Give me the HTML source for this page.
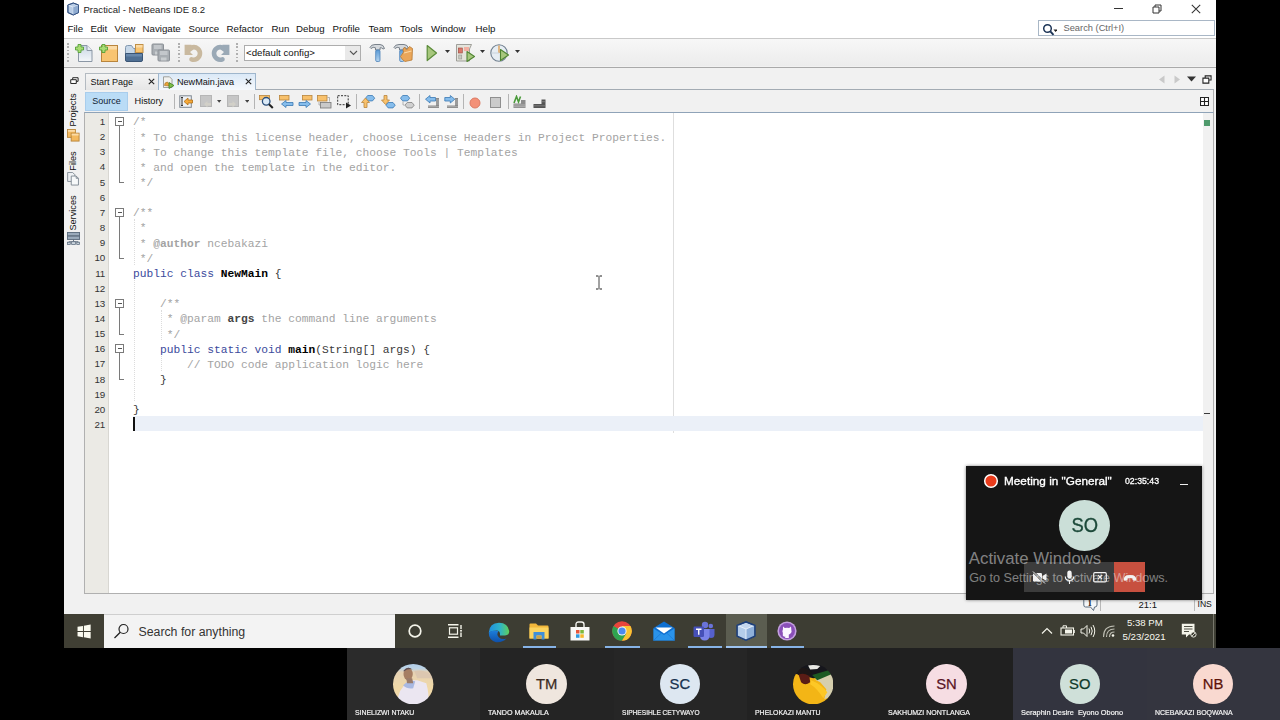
<!DOCTYPE html>
<html>
<head>
<meta charset="utf-8">
<title>Practical - NetBeans IDE 8.2</title>
<style>
*{box-sizing:border-box;margin:0;padding:0}
html,body{width:1280px;height:720px;overflow:hidden;background:#000;font-family:"Liberation Sans",sans-serif;}
.a{position:absolute}
.t{position:absolute;white-space:nowrap;line-height:1}
#win{left:64px;top:0;width:1152px;height:614px;background:#f1f1f1;overflow:hidden}
#title{left:0;top:0;width:1152px;height:38px;background:#fff}
.menu span{position:absolute;top:24px;font-size:9.7px;color:#111;white-space:nowrap;line-height:1}
#tbline{left:0;top:38px;width:1152px;height:1px;background:#c9c9c9}
#tbline2{left:0;top:66.5px;width:1152px;height:1px;background:#a9a9a9}
.code{position:absolute;left:69px;margin-top:2.2px;font-family:"Liberation Mono",monospace;font-size:11.25px;white-space:pre;line-height:15px;height:15px;color:#000}
.c{color:#a3a3a3}
.k{color:#3b4a9c}
.p{color:#3a3a3a}
.ln{position:absolute;left:21px;width:20px;margin-top:.8px;text-align:right;font-size:9.8px;letter-spacing:-.15px;color:#333;line-height:15px;height:15px}
.fold{position:absolute;margin-top:.7px;left:51px;width:9px;height:9px;border:1px solid #7a7a7a;background:#fff}
.fold:after{content:"";position:absolute;left:1.5px;top:3px;width:4px;height:1px;background:#555}
.fl{position:absolute;left:55px;width:1px;background:#7a7a7a}
.fe{position:absolute;left:55px;width:5px;height:1px;background:#7a7a7a}
.ig{position:absolute;width:0;border-left:1px dotted #dcdcdc}
.sep{position:absolute;top:94px;width:1px;height:15px;background:#b4b4b4}
</style>
</head>
<body>
<div id="win" class="a">
  <div id="title" class="a"></div>
  <!-- title text -->
  <div class="t" style="left:19.5px;top:5px;font-size:9.55px;color:#222">Practical - NetBeans IDE 8.2</div>
  <div class="menu">
    <span style="left:3.5px">File</span>
    <span style="left:26.5px">Edit</span>
    <span style="left:50.5px">View</span>
    <span style="left:78.5px">Navigate</span>
    <span style="left:124.5px">Source</span>
    <span style="left:162.5px">Refactor</span>
    <span style="left:207.5px">Run</span>
    <span style="left:232px">Debug</span>
    <span style="left:268.5px">Profile</span>
    <span style="left:304.5px">Team</span>
    <span style="left:336px">Tools</span>
    <span style="left:367px">Window</span>
    <span style="left:411.5px">Help</span>
  </div>
  <div id="tbline" class="a"></div>
  <div id="tbline2" class="a"></div>
  <div class="a" style="left:0;top:39px;width:1152px;height:27px;background:linear-gradient(#f7f7f7,#ececec)"></div>
<div class="a" style="left:2.5px;top:43px;width:2px;height:19px;background:repeating-linear-gradient(#b0b0b0 0 1.6px,transparent 1.6px 3.4px)"></div>
<div class="a" style="left:113.5px;top:43px;width:2px;height:19px;background:repeating-linear-gradient(#b0b0b0 0 1.6px,transparent 1.6px 3.4px)"></div>
<div class="a" style="left:171.5px;top:43px;width:2px;height:19px;background:repeating-linear-gradient(#b0b0b0 0 1.6px,transparent 1.6px 3.4px)"></div>
<svg class="a" style="left:10px;top:43px" width="20" height="20" viewBox="0 0 20 20"><defs><linearGradient id="pg" x1="0" y1="0" x2="0" y2="1"><stop offset="0" stop-color="#c9d6e4"/><stop offset="1" stop-color="#f4f7fa"/></linearGradient></defs><path d="M4.5 2.5H13L18 7.5V18.5H4.5Z" fill="url(#pg)" stroke="#8b97a5" stroke-width="1"/><path d="M13 2.5V7.5H18" fill="#e8eef4" stroke="#8b97a5" stroke-width="1"/><path d="M4 1.5H7V4H9.5V7H7V9.5H4V7H1.5V4H4Z" fill="#a9dc74" stroke="#55a03a" stroke-width=".9"/></svg>
<svg class="a" style="left:33.5px;top:43px" width="21" height="20" viewBox="0 0 21 20"><rect x="3.5" y="2.5" width="16" height="16" fill="#f8c471" stroke="#b9853d"/><rect x="4" y="3" width="15" height="3.5" fill="#fbdba6"/><path d="M4 1.5H7V4H9.5V7H7V9.5H4V7H1.5V4H4Z" fill="#a9dc74" stroke="#55a03a" stroke-width=".9"/></svg>
<svg class="a" style="left:60px;top:43px" width="20" height="20" viewBox="0 0 20 20"><path d="M1.500 4.500Q1.500 2.500 3.500 2.500H7.500L9.500 5.500H11V12H1.500Z" fill="#c6d7e8" stroke="#8197ae"/><rect x="11.500" y="1.500" width="7.500" height="8" fill="#f8c471" stroke="#c08f45"/><rect x="12" y="2" width="6.500" height="2.500" fill="#fbdba6"/><path d="M1.500 10.500H18.500V17Q18.500 18.500 17 18.500H3Q1.500 18.500 1.500 17Z" fill="#4f6f93" stroke="#3a5575"/><rect x="2" y="11" width="16" height="2.500" fill="#6787ab"/></svg>
<svg class="a" style="left:86.5px;top:43px" width="20" height="20" viewBox="0 0 20 20"><rect x="1" y="1" width="11.500" height="11" rx="1" fill="#a9aeb3" stroke="#8b9096"/><rect x="3" y="2" width="7.500" height="4" fill="#c3c7cb"/><rect x="4" y="8.500" width="5.500" height="3" fill="#c9cdd0"/><rect x="7" y="7" width="11.500" height="11" rx="1" fill="#a9aeb3" stroke="#8b9096"/><rect x="9" y="8" width="7.500" height="4" fill="#c3c7cb"/><rect x="10" y="14.500" width="5.500" height="3" fill="#c9cdd0"/></svg>
<svg class="a" style="left:120px;top:43px" width="20" height="20" viewBox="0 0 20 20"><path d="M8.500 4.200A6.300 6.300 0 1 1 7.500 16.300" fill="none" stroke="#c9b99f" stroke-width="4.600" stroke-linecap="round"/><path d="M.600 1.800H7.500L9.500 6.500L6 9L9 12H.600Z" fill="#c9b99f"/></svg>
<svg class="a" style="left:145.5px;top:43px" width="20" height="20" viewBox="0 0 20 20"><path d="M11.500 4.200A6.300 6.300 0 1 0 12.500 16.300" fill="none" stroke="#9aa9b6" stroke-width="4.600" stroke-linecap="round"/><path d="M19.400 1.800H12.500L10.500 6.500L14 9L11 12H19.400Z" fill="#9aa9b6"/></svg>
<div class="a" style="left:180px;top:44.5px;width:117px;height:16px;background:#fff;border:1px solid #adadad"></div>
<div class="a" style="left:281px;top:45.5px;width:15px;height:14px;background:#e9e9e9"></div>
<svg class="a" style="left:284.5px;top:50px" width="9" height="6" viewBox="0 0 9 6"><path d="M1 1L4.500 4.500L8 1" fill="none" stroke="#555" stroke-width="1.100"/></svg>
<div class="t" style="left:182px;top:48px;font-size:9.7px;color:#111">&lt;default config&gt;</div>
<svg class="a" style="left:305px;top:43px" width="17" height="20" viewBox="0 0 17 20"><defs><linearGradient id="hh" x1="0" y1="0" x2="0" y2="1"><stop offset="0" stop-color="#5a9ad6"/><stop offset="1" stop-color="#b5d5f0"/></linearGradient></defs><path d="M1 4.500Q2 1.500 6 1.500H11Q14.500 1.500 15.500 5.500L14 6Q13 4.500 11 4.800V7H6.500V4.800Q4 3.500 2 5.500Z" fill="#d5d9dd" stroke="#6d7680" stroke-width=".9"/><rect x="6.700" y="7" width="4.300" height="11.500" rx="1.200" fill="url(#hh)" stroke="#4a80b8" stroke-width=".8"/></svg>
<svg class="a" style="left:329px;top:43px" width="21" height="20" viewBox="0 0 21 20"><defs><linearGradient id="hh2" x1="0" y1="0" x2="0" y2="1"><stop offset="0" stop-color="#5a9ad6"/><stop offset="1" stop-color="#b5d5f0"/></linearGradient></defs><path d="M1 4.500Q2 1.500 6 1.500H11Q14.500 1.500 15.500 5.500L14 6Q13 4.500 11 4.800V7H6.500V4.800Q4 3.500 2 5.500Z" fill="#d5d9dd" stroke="#6d7680" stroke-width=".9"/><rect x="6.700" y="7" width="4.300" height="11.500" rx="1.200" fill="url(#hh2)" stroke="#4a80b8" stroke-width=".8"/><path d="M10.500 9Q9 5 12 4.500L13.500 7L16.500 3.500L19.500 5.500L19 17L12 18.500Q9 17 7.500 13.500Z" fill="#eaa659" stroke="#b77a34" stroke-width=".8"/><path d="M11 10L18.500 8" stroke="#fbd9a5" stroke-width="1.200"/></svg>
<svg class="a" style="left:362px;top:44px" width="12" height="18" viewBox="0 0 12 18"><path d="M1.200 1.500L10.500 9L1.200 16.500Z" fill="#a7c77d" stroke="#5b8c3a" stroke-width="1.200" stroke-linejoin="round"/></svg>
<svg class="a" style="left:381px;top:50px" width="5" height="3" viewBox="0 0 5 3"><path d="M0 0H5L2.5 3Z" fill="#333"/></svg>
<svg class="a" style="left:391.5px;top:43px" width="20" height="20" viewBox="0 0 20 20"><path d="M.500 1.500H15.500L13.500 6V18H.500Z" fill="#e4e4dc" stroke="#8b8b85" stroke-width=".8"/><rect x="2.300" y="5" width="4" height="5" fill="#d9776a" stroke="#9a4a40" stroke-width=".6"/><rect x="2.800" y="12" width="3" height="4" fill="#c9c9c0" stroke="#8b8b85" stroke-width=".5"/><rect x="8" y="4" width="5" height="4" fill="#f2b0a2"/><path d="M11 8.500L18.500 13.500L11 18.500Z" fill="#a7c77d" stroke="#4f8532" stroke-width="1.100" stroke-linejoin="round"/></svg>
<svg class="a" style="left:416px;top:50px" width="5" height="3" viewBox="0 0 5 3"><path d="M0 0H5L2.5 3Z" fill="#333"/></svg>
<svg class="a" style="left:425.5px;top:43px" width="20" height="20" viewBox="0 0 20 20"><circle cx="9" cy="10" r="8.200" fill="#e6edf3" stroke="#6f7f8f" stroke-width="1.100"/><path d="M9 10V2.500" stroke="#e19a4a" stroke-width="1.300"/><path d="M9 10H2" stroke="#c9d3dc" stroke-width="1"/><path d="M10.500 6.500L18.500 12L10.500 17.500Z" fill="#a7c77d" stroke="#4f8532" stroke-width="1.100" stroke-linejoin="round"/></svg>
<svg class="a" style="left:450.5px;top:50px" width="5" height="3" viewBox="0 0 5 3"><path d="M0 0H5L2.5 3Z" fill="#333"/></svg>
<div class="a" style="left:1050px;top:8px;width:9px;height:1px;background:#333"></div>
<svg class="a" style="left:1087.5px;top:3.7px" width="10" height="10" viewBox="0 0 10 10"><path d="M1 3H7V9H1Z M3 3V1H9V7H7" fill="none" stroke="#333" stroke-width="1"/></svg>
<svg class="a" style="left:1126.5px;top:4px" width="10" height="10" viewBox="0 0 10 10"><path d="M.800 .800L9.200 9.200M9.200 .800L.800 9.200" fill="none" stroke="#333" stroke-width="1.050"/></svg>
<div class="a" style="left:974.200px;top:20.300px;width:176.500px;height:16px;background:#fff;border:1px solid #a9b7c6"></div>
<svg class="a" style="left:977.5px;top:22.5px" width="15" height="13" viewBox="0 0 15 13"><circle cx="5.500" cy="5.500" r="3.800" fill="none" stroke="#1d3557" stroke-width="1.500"/><path d="M8.300 8.300L11.500 11.800" stroke="#1d3557" stroke-width="2"/><path d="M11.500 6.500H15.500L13.500 9Z" fill="#222"/></svg>
<div class="t" style="left:999.5px;top:24px;font-size:9.3px;color:#666">Search (Ctrl+I)</div>
<svg class="a" style="left:2.7px;top:2.3px" width="12.5" height="14" viewBox="0 0 14 15"><path d="M7 .800L13 3V11.500L7 14.200L1 11.500V3Z" fill="#b9cde6" stroke="#2f4f80" stroke-width="1"/><path d="M1 3L7 5.500L13 3M7 5.500V14" fill="none" stroke="#e8f0fa" stroke-width=".9"/><path d="M7 5.500L13 3V11.500L7 14.200Z" fill="#8fabd0"/><path d="M7 .800L13 3V11.500L7 14.200L1 11.500V3Z" fill="none" stroke="#2f4f80" stroke-width="1"/></svg>
  <div class="a" style="left:20.500px;top:89px;width:1129px;height:1px;background:#a3abb3"></div>
<div class="a" style="left:20.500px;top:73px;width:74px;height:16.500px;background:linear-gradient(#f4f4f4,#e6e6e6);border:1px solid #b3bac1;border-bottom:none"></div>
<div class="t" style="left:26.500px;top:77.500px;font-size:9px;color:#111">Start Page</div>
<svg class="a" style="left:83.5px;top:78px" width="7" height="7" viewBox="0 0 7 7"><path d="M.800 .800L6.200 6.200M6.200 .800L.800 6.200" stroke="#222" stroke-width="1.100" fill="none"/></svg>
<div class="a" style="left:94px;top:73px;width:98px;height:17.500px;background:linear-gradient(#dbe9f7,#f7fafd);border:1px solid #9fb6cc;border-bottom:none"></div>
<svg class="a" style="left:98px;top:75.5px" width="13" height="13" viewBox="0 0 13 13"><path d="M1.500 .800H7.500L10 3.300V11.500H1.500Z" fill="#f1f1ee" stroke="#8d8d86" stroke-width=".8"/><path d="M2.500 9.500Q2.500 6 5.500 6Q6 8 8.500 7.500L7 10Z" fill="#e8a33a" stroke="#a86e1c" stroke-width=".6"/><path d="M7 6.500L12 9.500L7 12.500Z" fill="#7fc04a" stroke="#3f7f24" stroke-width=".8"/></svg>
<div class="t" style="left:113px;top:77.500px;font-size:9.100px;color:#111">NewMain.java</div>
<svg class="a" style="left:181px;top:78px" width="7" height="7" viewBox="0 0 7 7"><path d="M.800 .800L6.200 6.200M6.200 .800L.800 6.200" stroke="#222" stroke-width="1.100" fill="none"/></svg>
<svg class="a" style="left:1094px;top:75px" width="8" height="9" viewBox="0 0 8 9"><path d="M6.500 .500V8.500L1 4.500Z" fill="#c9c9c9"/></svg>
<svg class="a" style="left:1109px;top:75px" width="8" height="9" viewBox="0 0 8 9"><path d="M1.500 .500V8.500L7 4.500Z" fill="#c9c9c9"/></svg>
<svg class="a" style="left:1123px;top:76px" width="9" height="6" viewBox="0 0 9 6"><path d="M0 .500H9L4.500 5.500Z" fill="#333"/></svg>
<svg class="a" style="left:1137.5px;top:74.8px" width="10" height="9" viewBox="0 0 11 10"><path d="M3.500 3.500V1H10V5.500H7.500M1 3.500H7.500V9H1Z" fill="#fff" stroke="#222" stroke-width="1.200"/></svg>
<div class="a" style="left:20.500px;top:90px;width:1129px;height:22px;background:#f1f1f1;border-right:1px solid #b0b0b0"></div>
<div class="a" style="left:21px;top:92px;width:42.500px;height:18.500px;background:#badcf6;border:1px solid #a9cdec"></div>
<div class="t" style="left:28.300px;top:96.700px;font-size:9px;color:#123">Source</div>
<div class="t" style="left:70.500px;top:96.700px;font-size:9.200px;color:#111">History</div>
<div class="sep" style="left:110.2px"></div>
<div class="sep" style="left:190.3px"></div>
<div class="sep" style="left:292.3px"></div>
<div class="sep" style="left:355.3px"></div>
<div class="sep" style="left:399.4px"></div>
<div class="sep" style="left:443.6px"></div>
<svg class="a" style="left:115px;top:94.5px" width="15" height="14" viewBox="0 0 15 14"><rect x=".800" y=".800" width="11.500" height="11.500" fill="#eef1f4" stroke="#7d8791" stroke-width="1"/><path d="M3 2.500V10.500M2 2.500H4M2 10.500H4" stroke="#222" stroke-width=".9"/><path d="M5 6.500L9 3V5H13.500V8H9V10Z" fill="#f5a93a" stroke="#b06f14" stroke-width=".8"/></svg>
<svg class="a" style="left:135.5px;top:95px" width="13" height="14" viewBox="0 0 13 14"><rect x=".500" y=".500" width="11" height="11" fill="#c6c6c6" stroke="#b6b6b6"/><path d="M4 9L7.500 6V8H11V10.500H7.500V12.500Z" fill="#d2d0c8"/></svg>
<svg class="a" style="left:153.2px;top:100px" width="4.4" height="2.7" viewBox="0 0 5 3"><path d="M0 0H5L2.500 3Z" fill="#444"/></svg>
<svg class="a" style="left:163px;top:95px" width="13" height="14" viewBox="0 0 13 14"><rect x=".500" y=".500" width="11" height="11" fill="#c6c6c6" stroke="#b6b6b6"/><path d="M9 9L5.500 6V8H2V10.500H5.500V12.500Z" fill="#d2d0c8"/></svg>
<svg class="a" style="left:180.8px;top:100px" width="4.4" height="2.7" viewBox="0 0 5 3"><path d="M0 0H5L2.500 3Z" fill="#444"/></svg>
<svg class="a" style="left:194.5px;top:95px" width="15" height="14" viewBox="0 0 15 14"><rect x=".500" y=".500" width="10" height="4.200" fill="#f8c16c" stroke="#b9853d" stroke-width=".8"/><circle cx="7.200" cy="6.300" r="3.800" fill="#dbeaf7" stroke="#2a4f7c" stroke-width="1.300"/><path d="M10 9.200L13.800 13" stroke="#222" stroke-width="2"/></svg>
<svg class="a" style="left:214.5px;top:95px" width="15" height="14" viewBox="0 0 15 14"><rect x=".500" y=".500" width="9.500" height="4.500" fill="#f8c16c" stroke="#b9853d" stroke-width=".8"/><path d="M2.500 9L7 5.500V7.500H14V10.500H7V12.500Z" fill="#86bdec" stroke="#3a78b4" stroke-width=".8"/></svg>
<svg class="a" style="left:233.5px;top:95px" width="15" height="14" viewBox="0 0 15 14"><rect x="4.500" y=".500" width="9.500" height="4.500" fill="#f8c16c" stroke="#b9853d" stroke-width=".8"/><path d="M12.500 9L8 5.500V7.500H1V10.500H8V12.500Z" fill="#86bdec" stroke="#3a78b4" stroke-width=".8"/></svg>
<svg class="a" style="left:253px;top:95px" width="15" height="14" viewBox="0 0 15 14"><rect x=".500" y=".500" width="9.500" height="5.500" fill="#f8c16c" stroke="#b9853d" stroke-width=".8"/><rect x="3.500" y="7.500" width="10.500" height="5.500" fill="#c9c9c9" stroke="#777" stroke-width=".8"/><path d="M10.500 2.500H12.500V6.500M2 7V10H3" fill="none" stroke="#999" stroke-width=".7"/></svg>
<svg class="a" style="left:272.5px;top:95px" width="15" height="14" viewBox="0 0 15 14"><rect x=".700" y=".700" width="10.500" height="9" fill="none" stroke="#333" stroke-width="1" stroke-dasharray="2 1.300"/><path d="M9 7.500L14 10.500L9 13.500Z" fill="#222"/></svg>
<svg class="a" style="left:297px;top:95px" width="15" height="14" viewBox="0 0 15 14"><path d="M4.5 3.2L6.7 0.5H11.5L13.7 3.2L11.5 5.9H6.7Z" fill="#86bdec" stroke="#3a78b4" stroke-width=".8"/><path d="M4.500 3L8.500 7.500H6V12.500H3V7.500H.500Z" fill="#f8c16c" stroke="#b9853d" stroke-width=".8"/></svg>
<svg class="a" style="left:316.5px;top:95px" width="15" height="14" viewBox="0 0 15 14"><path d="M4.500 9.500L8.500 5H6V.500H3V5H.500Z" fill="#f8c16c" stroke="#b9853d" stroke-width=".8"/><path d="M5 10.2L7.2 7.5H12L14.2 10.2L12 12.9H7.2Z" fill="#86bdec" stroke="#3a78b4" stroke-width=".8"/></svg>
<svg class="a" style="left:335.5px;top:95px" width="15" height="14" viewBox="0 0 15 14"><path d="M0.5 3.2L2.7 0.5H7.5L9.7 3.2L7.5 5.9H2.7Z" fill="#86bdec" stroke="#3a78b4" stroke-width=".8"/><path d="M5 10.2L7.2 7.5H12L14.2 10.2L12 12.9H7.2Z" fill="#d0d0d0" stroke="#808080" stroke-width=".8"/><path d="M3 6.500V10H4.500" fill="none" stroke="#999" stroke-width=".7"/></svg>
<svg class="a" style="left:360.5px;top:95px" width="15" height="14" viewBox="0 0 15 14"><path d="M11 3H14V13H3V10.500H11Z" fill="#8a8a8a"/><path d="M11 5H14M11 7H14M11 9H14M3 11.700H14" stroke="#c4c4c4" stroke-width=".6"/><path d="M.500 4.200L5 .500V2.500H10.500V6H5V8Z" fill="#86bdec" stroke="#3a78b4" stroke-width=".8"/></svg>
<svg class="a" style="left:379.5px;top:95px" width="15" height="14" viewBox="0 0 15 14"><path d="M11 3H14V13H3V10.500H11Z" fill="#8a8a8a"/><path d="M11 5H14M11 7H14M11 9H14M3 11.700H14" stroke="#c4c4c4" stroke-width=".6"/><path d="M10.800 4.200L6.300 .500V2.500H.800V6H6.300V8Z" fill="#86bdec" stroke="#3a78b4" stroke-width=".8"/></svg>
<svg class="a" style="left:405px;top:96.5px" width="12" height="12" viewBox="0 0 12 12"><circle cx="6" cy="6" r="5" fill="#f39178" stroke="#dc7a63" stroke-width="1"/></svg>
<svg class="a" style="left:425.5px;top:96.5px" width="11" height="11" viewBox="0 0 11 11"><rect x=".500" y=".500" width="10" height="10" fill="#cbcbcb" stroke="#8f8f8f"/></svg>
<svg class="a" style="left:449px;top:95px" width="14" height="14" viewBox="0 0 14 14"><path d="M1 8L3.500 1.500L5.500 7L7.500 1.500" fill="none" stroke="#4a9a3a" stroke-width="1.600"/><path d="M.500 8.500H8V5H12.500V13H.500Z" fill="#8c8c8c"/><path d="M.500 10H12.500M.500 11.700H12.500" stroke="#c9c9c9" stroke-width=".6"/></svg>
<svg class="a" style="left:469px;top:95px" width="14" height="14" viewBox="0 0 14 14"><path d="M.500 9H8.500V4.500H12.500V13H.500Z" fill="#555"/><path d="M.500 10.800H12.500M8.500 6.700H12.500" stroke="#999" stroke-width=".6"/></svg>
<svg class="a" style="left:1136px;top:96.5px" width="9" height="9" viewBox="0 0 9 9"><path d="M.500 .500H8.500V8.500H.500ZM4.500 .500V8.500M.500 4.500H8.500" fill="#fff" stroke="#222" stroke-width="1.100"/></svg>
  <svg class="a" style="left:5.7px;top:76.8px" width="9" height="7.2" viewBox="0 0 10 8"><path d="M3 3V.800H9V4.800H7M.800 3H7V7.200H.800Z" fill="#fff" stroke="#222" stroke-width="1.100"/></svg>
<div class="t" style="left:9.500px;top:109.5px;font-size:9.2px;color:#111;transform:translate(-50%,-50%) rotate(-90deg)">Projects</div>
<svg class="a" style="left:3.3px;top:129.3px" width="13" height="13" viewBox="0 0 14 14"><rect x=".500" y=".500" width="8.500" height="8.500" fill="#f3b95f" stroke="#b8853a"/><rect x="1" y="1" width="7.500" height="2" fill="#fbdba6"/><rect x="4.500" y="4.500" width="8.500" height="8.500" fill="#f3b95f" stroke="#b8853a"/><rect x="5" y="5" width="7.500" height="2" fill="#fbdba6"/></svg>
<div class="t" style="left:9.500px;top:160.5px;font-size:9.2px;color:#111;transform:translate(-50%,-50%) rotate(-90deg)">Files</div>
<svg class="a" style="left:3.3px;top:172px" width="13" height="13.5" viewBox="0 0 14 15"><path d="M.500 .500H6L8.500 3V10.500H.500Z" fill="#eef1f4" stroke="#7d8791"/><path d="M4.500 4.500H10L12.500 7V14.500H4.500Z" fill="#f7f9fa" stroke="#7d8791"/><path d="M10 4.500V7H12.500" fill="none" stroke="#7d8791"/></svg>
<div class="t" style="left:9.500px;top:212.5px;font-size:9.2px;color:#111;transform:translate(-50%,-50%) rotate(-90deg)">Services</div>
<svg class="a" style="left:3.3px;top:232px" width="13" height="13" viewBox="0 0 14 14"><rect x=".500" y=".500" width="13" height="3.500" fill="#9aaabb" stroke="#5b6b7d"/><rect x=".500" y="4.500" width="13" height="3.500" fill="#9aaabb" stroke="#5b6b7d"/><path d="M7 8V10M2 13V10.500H12V13" fill="none" stroke="#5b6b7d"/><rect x="5" y="10.500" width="4" height="3" fill="#c9d3dc" stroke="#5b6b7d" stroke-width=".8"/><rect x=".500" y="11" width="3" height="2.500" fill="#c9d3dc" stroke="#5b6b7d" stroke-width=".8"/><rect x="10.500" y="11" width="3" height="2.500" fill="#c9d3dc" stroke="#5b6b7d" stroke-width=".8"/></svg>
  <div class="a" style="left:20px;top:112px;width:1130px;height:482px;background:#fff;border:1px solid #b0b0b0;border-top-color:#8fa3b8"></div>
<div class="a" style="left:21px;top:113px;width:23.5px;height:480px;background:#ebeae5"></div>
<div class="a" style="left:44px;top:113px;width:1px;height:480px;background:#d8d7d2"></div>
<div class="a" style="left:1138.5px;top:113px;width:10.5px;height:480px;background:#f1f1f1"></div>
<div class="a" style="left:1140px;top:120px;width:6px;height:6px;background:#4f9a6c"></div>
<div class="a" style="left:1140px;top:413.200px;width:6px;height:1.200px;background:#3a3a3a"></div>
<div class="a" style="left:609px;top:113px;width:1px;height:320px;background:#dedede"></div>
<div class="a" style="left:69px;top:416.25px;width:1069.5px;height:15px;background:#ebf0f8"></div>
<div class="a" style="left:69px;top:417px;width:2px;height:14px;background:#111"></div>
<div class="ln" style="top:113.25px">1</div>
<div class="code" style="top:113.25px"><span class="c">/*</span></div>
<div class="ln" style="top:128.40px">2</div>
<div class="code" style="top:128.40px"><span class="c"> * To change this license header, choose License Headers in Project Properties.</span></div>
<div class="ln" style="top:143.55px">3</div>
<div class="code" style="top:143.55px"><span class="c"> * To change this template file, choose Tools | Templates</span></div>
<div class="ln" style="top:158.70px">4</div>
<div class="code" style="top:158.70px"><span class="c"> * and open the template in the editor.</span></div>
<div class="ln" style="top:173.85px">5</div>
<div class="code" style="top:173.85px"><span class="c"> */</span></div>
<div class="ln" style="top:189.00px">6</div>
<div class="ln" style="top:204.15px">7</div>
<div class="code" style="top:204.15px"><span class="c">/**</span></div>
<div class="ln" style="top:219.30px">8</div>
<div class="code" style="top:219.30px"><span class="c"> *</span></div>
<div class="ln" style="top:234.45px">9</div>
<div class="code" style="top:234.45px"><span class="c"> * <b>@author</b> ncebakazi</span></div>
<div class="ln" style="top:249.60px">10</div>
<div class="code" style="top:249.60px"><span class="c"> */</span></div>
<div class="ln" style="top:264.75px">11</div>
<div class="code" style="top:264.75px"><span class="k">public class</span> <b>NewMain</b> <span class="p">{</span></div>
<div class="ln" style="top:279.90px">12</div>
<div class="ln" style="top:295.05px">13</div>
<div class="code" style="top:295.05px">    <span class="c">/**</span></div>
<div class="ln" style="top:310.20px">14</div>
<div class="code" style="top:310.20px">    <span class="c"> * @param <b style="color:#444">args</b> the command line arguments</span></div>
<div class="ln" style="top:325.35px">15</div>
<div class="code" style="top:325.35px">    <span class="c"> */</span></div>
<div class="ln" style="top:340.50px">16</div>
<div class="code" style="top:340.50px">    <span class="k">public static void</span> <b>main</b><span class="p">(String[] args) {</span></div>
<div class="ln" style="top:355.65px">17</div>
<div class="code" style="top:355.65px">        <span class="c">// TODO code application logic here</span></div>
<div class="ln" style="top:370.80px">18</div>
<div class="code" style="top:370.80px">    <span class="p">}</span></div>
<div class="ln" style="top:385.95px">19</div>
<div class="ln" style="top:401.10px">20</div>
<div class="code" style="top:401.10px"><span class="p">}</span></div>
<div class="ln" style="top:416.25px">21</div>
<div class="fold" style="top:116.45px"></div>
<div class="fl" style="top:125.45px;height:56.90px"></div>
<div class="fe" style="top:182.35px"></div>
<div class="fold" style="top:207.35px"></div>
<div class="fl" style="top:216.35px;height:41.75px"></div>
<div class="fe" style="top:258.10px"></div>
<div class="fold" style="top:298.25px"></div>
<div class="fl" style="top:307.25px;height:26.60px"></div>
<div class="fe" style="top:333.85px"></div>
<div class="fold" style="top:343.70px"></div>
<div class="fl" style="top:352.70px;height:26.60px"></div>
<div class="fe" style="top:379.30px"></div>
<div class="ig" style="left:69.5px;top:128.40px;height:60.60px"></div>
<div class="ig" style="left:69.5px;top:219.30px;height:45.45px"></div>
<div class="ig" style="left:69.5px;top:279.90px;height:121.20px"></div>
<div class="ig" style="left:96.5px;top:310.20px;height:30.30px"></div>
<div class="ig" style="left:96.5px;top:355.65px;height:15.15px"></div>
<svg class="a" style="left:532px;top:274.500px" width="6" height="15" viewBox="0 0 6 15"><path d="M0 1H2.400M3.600 1H6M0 14H2.400M3.600 14H6" stroke="#222" stroke-width="1.100"/><path d="M3 1.200V13.800" stroke="#444" stroke-width="1"/></svg>
  <div class="a" style="left:1035.500px;top:598px;width:1px;height:13px;background:#b9b9b9"></div>
<div class="a" style="left:1129.500px;top:598px;width:1px;height:13px;background:#b9b9b9"></div>
<svg class="a" style="left:1019px;top:596px" width="15" height="16" viewBox="0 0 15 16"><path d="M2.500 1H12Q14 1 14 3V9Q14 11 12 11H11.500L10.500 14.500L7.500 11H2.500Q.800 11 .800 9V3Q.800 1 2.500 1Z" fill="#f4f7fa" stroke="#5b6b7d" stroke-width="1"/></svg>
<div class="t" style="left:1023.500px;top:598.500px;font-size:9px;font-weight:bold;color:#222;font-family:'Liberation Serif',serif">1</div>
<div class="t" style="left:1074.500px;top:599.700px;font-size:9.500px;color:#111">21:1</div>
<div class="t" style="left:1133.500px;top:599.800px;font-size:8.600px;color:#111">INS</div>
</div>
<div class="a" style="left:64px;top:614px;width:1152px;height:34px;background:#3d3d33"></div>
<div class="a" style="left:64px;top:614px;width:40px;height:34px;background:#403f34"></div>
<svg class="a" style="left:76.8px;top:623.8px" width="14.2" height="15" viewBox="0 0 15 16"><path d="M.500 3L6.300 2V7.500H.500ZM7.300 1.800L14.500 .500V7.500H7.300ZM.500 8.500H6.300V14L.500 13ZM7.300 8.500H14.500V15.500L7.300 14.200Z" fill="#fbfbf0"/></svg>
<div class="a" style="left:104px;top:614px;width:290.500px;height:34px;background:#f3f3f3;border-top:1px solid #cfcfcf"></div>
<svg class="a" style="left:113px;top:623px" width="17" height="17" viewBox="0 0 17 17"><circle cx="10.500" cy="6" r="4.500" fill="none" stroke="#222" stroke-width="1.200"/><path d="M7.300 9.200L1.500 15" stroke="#222" stroke-width="1.300"/></svg>
<div class="t" style="left:138.500px;top:626px;font-size:12.300px;color:#333">Search for anything</div>
<svg class="a" style="left:406.5px;top:622.7px" width="16" height="16" viewBox="0 0 16 16"><circle cx="8" cy="8" r="5.800" fill="none" stroke="#f4f4ea" stroke-width="1.700"/></svg>
<svg class="a" style="left:447px;top:623.5px" width="16" height="14" viewBox="0 0 16 14"><rect x="2.500" y="3.800" width="8" height="6.400" fill="none" stroke="#f4f4ea" stroke-width="1.200"/><path d="M1 .800H11.500M1 13.200H11.500" stroke="#f4f4ea" stroke-width="1.400"/><path d="M14 1V5M14 8.500V13" stroke="#f4f4ea" stroke-width="1.400"/><circle cx="14" cy="6.700" r="1" fill="#f4f4ea"/></svg>
<svg class="a" style="left:487.5px;top:621.5px" width="22" height="21" viewBox="0 0 22 21"><defs><linearGradient id="eg1" x1="0" y1="0" x2="1" y2="0"><stop offset="0" stop-color="#1f8fe0"/><stop offset=".55" stop-color="#2fb4c8"/><stop offset="1" stop-color="#5fcf5a"/></linearGradient><linearGradient id="eg2" x1="0" y1="0" x2="0" y2="1"><stop offset="0" stop-color="#1c7fdc"/><stop offset="1" stop-color="#0f4fa8"/></linearGradient></defs><path d="M.800 10.500Q1.500 1 11 .800Q20 1 21.200 9Q21.500 13 17 13.500H12Q12.500 9 9 8.500Q4 8.500 .800 10.500Z" fill="url(#eg1)"/><path d="M.800 10.500Q.500 18 8 20.200Q14 21 18.500 16.500Q14 18 11 15.500Q8 12.500 10.500 9Q5 7.500 .800 10.500Z" fill="url(#eg2)"/></svg>
<svg class="a" style="left:529px;top:622.5px" width="20" height="17" viewBox="0 0 20 17"><path d="M.500 1.500Q.500 .500 1.500 .500H7L9 2.500H18.500Q19.500 2.500 19.500 3.500V15.500H.500Z" fill="#f2b73b"/><path d="M.500 4.500H19.500V15.500H.500Z" fill="#fbd35f"/><path d="M4.500 9H15.500V16.500H12.500V12.500H7.500V16.500H4.500Z" fill="#3f8fd8"/><rect x="7.500" y="12.500" width="5" height="3" fill="#c9a24a"/></svg>
<div class="a" style="left:523px;top:646px;width:33px;height:2px;background:#86b3e6"></div>
<svg class="a" style="left:570px;top:621px" width="20" height="20" viewBox="0 0 20 20"><path d="M6 6V3.500Q6 1 8.500 1H11.500Q14 1 14 3.500V6" fill="none" stroke="#f4f4f0" stroke-width="1.400"/><path d="M.500 6H19.500V19.500H.500Z" fill="#f8f8f6"/><rect x="6" y="9" width="3.500" height="3.500" fill="#e8563a"/><rect x="10.300" y="9" width="3.500" height="3.500" fill="#7db93a"/><rect x="6" y="13.300" width="3.500" height="3.500" fill="#2f9be0"/><rect x="10.300" y="13.300" width="3.500" height="3.500" fill="#f5b82a"/></svg>
<svg class="a" style="left:612px;top:620.7px" width="20" height="20" viewBox="0 0 20 20"><circle cx="10" cy="10" r="9.800" fill="#e8453c"/><path d="M10 10L1.500 5.100A9.800 9.800 0 0 0 10 19.800L14.500 12.500Z" fill="#2fa350"/><path d="M10 10L14.300 12.500L10 19.800A9.800 9.800 0 0 0 18.500 5.100H10Z" fill="#f9c432"/><circle cx="10" cy="10" r="4.600" fill="#f4f4f4"/><circle cx="10" cy="10" r="3.600" fill="#4a8af0"/></svg>
<div class="a" style="left:605px;top:646px;width:34.5px;height:2px;background:#86b3e6"></div>
<svg class="a" style="left:652.5px;top:621px" width="22" height="20" viewBox="0 0 22 20"><path d="M.500 7L11 .500L21.500 7V19.500H.500Z" fill="#0f6fd0"/><path d="M2.500 6.500H19.500L11 12.500Z" fill="#ffffff"/><path d="M.500 7.500L11 14L21.500 7.500V19.500H.500Z" fill="#2a93ea"/><path d="M.500 19.500L8 12.300M21.500 19.500L14 12.300" stroke="#1a7ad8" stroke-width=".8"/></svg>
<svg class="a" style="left:693px;top:621px" width="22" height="20" viewBox="0 0 22 20"><circle cx="17.800" cy="5" r="2.300" fill="#6a73d8"/><circle cx="12" cy="4" r="3.200" fill="#6a73d8"/><path d="M14.500 8H21.500V13.500Q21.500 17 18 17Q16.500 17 15.500 16Z" fill="#5560cc"/><path d="M7 8H16.500V14.500Q16.500 19.500 11.700 19.500Q7 19.500 7 14.500Z" fill="#7a83e8"/><rect x=".500" y="5.500" width="10.500" height="10.500" rx="1.200" fill="#4650b8"/><path d="M3 8.300H8.500M5.750 8.300V13.800" stroke="#fff" stroke-width="1.400"/></svg>
<div class="a" style="left:687.5px;top:646px;width:34.0px;height:2px;background:#86b3e6"></div>
<div class="a" style="left:726px;top:614px;width:40.500px;height:34px;background:#5b5d50"></div>
<svg class="a" style="left:735.5px;top:621px" width="20" height="20" viewBox="0 0 20 20"><path d="M10 .800L18.800 4.300V15.200L10 19.200L1.200 15.200V4.300Z" fill="#c3d6ee" stroke="#1d3f7a" stroke-width="1.300" stroke-linejoin="round"/><path d="M10 8L18.800 4.300V15.200L10 19.200Z" fill="#8fb0da"/><path d="M10 8L1.200 4.300V15.200L10 19.200Z" fill="#b5cdea"/><path d="M1.200 4.300L10 8L18.800 4.300M10 8V19" fill="none" stroke="#eaf2fc" stroke-width=".9"/><path d="M10 .800L18.800 4.300V15.200L10 19.200L1.200 15.200V4.300Z" fill="none" stroke="#1d3f7a" stroke-width="1.300" stroke-linejoin="round"/></svg>
<div class="a" style="left:726px;top:646px;width:40.5px;height:2px;background:#9cc2ee"></div>
<svg class="a" style="left:777px;top:620.5px" width="20" height="20" viewBox="0 0 20 20"><circle cx="10" cy="10" r="9.600" fill="#c4a0e0"/><circle cx="10" cy="10" r="8" fill="#8a4fb8"/><path d="M6 5.500L7.800 7Q10 6.300 12.200 7L14 5.500L14.300 8.500Q15.200 11 13.500 12.500Q12.500 13.300 11.800 13.500V17H8.200V15.500Q6.500 16 5.800 14.500M8.200 13.500Q7.500 13.300 6.500 12.500Q4.800 11 5.700 8.500Z" fill="#fbf6ff"/></svg>
<div class="a" style="left:770.5px;top:646px;width:33.5px;height:2px;background:#86b3e6"></div>
<svg class="a" style="left:1041px;top:627px" width="12" height="8" viewBox="0 0 12 8"><path d="M1 6.500L6 1.500L11 6.500" fill="none" stroke="#f4f4ea" stroke-width="1.200"/></svg>
<svg class="a" style="left:1059.5px;top:625px" width="15" height="12" viewBox="0 0 15 12"><rect x="1" y="3" width="12.500" height="7" fill="none" stroke="#f4f4ea" stroke-width="1.100"/><rect x="5" y="4.500" width="7" height="4" fill="#f4f4ea"/><path d="M3 3V.800H6.500V3" fill="none" stroke="#f4f4ea" stroke-width="1"/><rect x="13.500" y="5" width="1.300" height="3" fill="#f4f4ea"/></svg>
<svg class="a" style="left:1079.5px;top:624px" width="16" height="14" viewBox="0 0 16 14"><path d="M1 5H3.500L7 1.500V12.500L3.500 9H1Z" fill="none" stroke="#f4f4ea" stroke-width="1"/><path d="M9 4.500Q10.500 7 9 9.500M11 2.800Q13.500 7 11 11.200M13 1Q16.500 7 13 13" fill="none" stroke="#f4f4ea" stroke-width="1"/></svg>
<svg class="a" style="left:1102px;top:624px" width="14" height="14" viewBox="0 0 14 14"><path d="M1.500 13Q1.500 2 12.500 2M4.500 13Q4.500 5 12.500 5M7.500 13Q7.500 8 12.500 8" fill="none" stroke="#bdbdb2" stroke-width="1.100"/><circle cx="11" cy="11.500" r="1.300" fill="#f4f4ea"/></svg>
<div class="t" style="left:1127px;top:617.800px;font-size:9.600px;color:#f8f8f0">5:38 PM</div>
<div class="t" style="left:1122.500px;top:632.300px;font-size:9.700px;color:#f8f8f0">5/23/2021</div>
<svg class="a" style="left:1180.5px;top:623px" width="16" height="16" viewBox="0 0 16 16"><path d="M.800 .800H13.500V11.500H8L5 14.500V11.500H.800Z" fill="#f4f4ea"/><path d="M3 3.500H11.500M3 6H11.500M3 8.500H8" stroke="#3d3d33" stroke-width=".9"/><circle cx="12.500" cy="11.500" r="2.600" fill="#3d3d33" stroke="#f4f4ea" stroke-width=".9"/><path d="M11 13L14 10" stroke="#f4f4ea" stroke-width=".8"/></svg>
<div class="a" style="left:1212.500px;top:614px;width:1px;height:34px;background:#77776c"></div>
<div class="a" style="left:347.00px;top:648px;width:133.79px;height:72px;background:#2b2b2b"></div>
<div class="t" style="left:355.00px;top:708.800px;font-size:7.8px;color:#f4f4f4;-webkit-text-stroke:.2px #f4f4f4;transform-origin:0 0;transform:scaleX(0.886)">SINELIZWI NTAKU</div>
<div class="a" style="left:480.29px;top:648px;width:133.79px;height:72px;background:#242424"></div>
<div class="a" style="left:526.39px;top:663.700px;width:40.400px;height:40.400px;border-radius:50%;background:#efe6de;color:#3a2a22;font-size:14.800px;line-height:40.400px;text-align:center;-webkit-text-stroke:.25px #3a2a22">TM</div>
<div class="t" style="left:488.29px;top:708.800px;font-size:7.8px;color:#f4f4f4;-webkit-text-stroke:.2px #f4f4f4;transform-origin:0 0;transform:scaleX(0.918)">TANDO MAKAULA</div>
<div class="a" style="left:613.57px;top:648px;width:133.79px;height:72px;background:#262626"></div>
<div class="a" style="left:659.67px;top:663.700px;width:40.400px;height:40.400px;border-radius:50%;background:#dde7f1;color:#16314f;font-size:14.800px;line-height:40.400px;text-align:center;-webkit-text-stroke:.25px #16314f">SC</div>
<div class="t" style="left:621.57px;top:708.800px;font-size:7.8px;color:#f4f4f4;-webkit-text-stroke:.2px #f4f4f4;transform-origin:0 0;transform:scaleX(0.844)">SIPHESIHLE CETYWAYO</div>
<div class="a" style="left:746.86px;top:648px;width:133.79px;height:72px;background:#222222"></div>
<div class="t" style="left:754.86px;top:708.800px;font-size:7.8px;color:#f4f4f4;-webkit-text-stroke:.2px #f4f4f4;transform-origin:0 0;transform:scaleX(0.889)">PHELOKAZI MANTU</div>
<div class="a" style="left:880.14px;top:648px;width:133.79px;height:72px;background:#202020"></div>
<div class="a" style="left:926.24px;top:663.700px;width:40.400px;height:40.400px;border-radius:50%;background:#f6dde3;color:#5a1526;font-size:14.800px;line-height:40.400px;text-align:center;-webkit-text-stroke:.25px #5a1526">SN</div>
<div class="t" style="left:888.14px;top:708.800px;font-size:7.8px;color:#f4f4f4;-webkit-text-stroke:.2px #f4f4f4;transform-origin:0 0;transform:scaleX(0.901)">SAKHUMZI NONTLANGA</div>
<div class="a" style="left:1013.43px;top:648px;width:133.79px;height:72px;background:#33343f"></div>
<div class="a" style="left:1059.53px;top:663.700px;width:40.400px;height:40.400px;border-radius:50%;background:#cfe0d9;color:#0f3a2a;font-size:14.800px;line-height:40.400px;text-align:center;-webkit-text-stroke:.25px #0f3a2a">SO</div>
<div class="t" style="left:1021.43px;top:708.800px;font-size:7.8px;color:#f4f4f4;-webkit-text-stroke:.2px #f4f4f4;transform-origin:0 0;transform:scaleX(0.945)">Seraphin Desire&nbsp; Eyono Obono</div>
<div class="a" style="left:1146.71px;top:648px;width:133.79px;height:72px;background:#34353f"></div>
<div class="a" style="left:1192.81px;top:663.700px;width:40.400px;height:40.400px;border-radius:50%;background:#f9d9d0;color:#5c1208;font-size:14.800px;line-height:40.400px;text-align:center;-webkit-text-stroke:.25px #5c1208">NB</div>
<div class="t" style="left:1154.71px;top:708.800px;font-size:7.8px;color:#f4f4f4;-webkit-text-stroke:.2px #f4f4f4;transform-origin:0 0;transform:scaleX(0.895)">NCEBAKAZI BOQWANA</div>
<svg class="a" style="left:393.200px;top:663.800px" width="40.400" height="40.400" viewBox="0 0 40 40"><defs><filter id="bl1" x="-10%" y="-10%" width="120%" height="120%"><feGaussianBlur stdDeviation=".7"/></filter><clipPath id="cp1"><circle cx="20" cy="20" r="20"/></clipPath><linearGradient id="sk1" x1="0" y1="0" x2="0" y2="1"><stop offset="0" stop-color="#a9c9ea"/><stop offset=".16" stop-color="#bcd3e6"/><stop offset=".24" stop-color="#e6d2b4"/><stop offset=".6" stop-color="#f1d9a6"/><stop offset="1" stop-color="#ecd7b4"/></linearGradient></defs><g clip-path="url(#cp1)"><g filter="url(#bl1)"><rect x="-3" y="-3" width="46" height="46" fill="url(#sk1)"/><path d="M21 7Q30 5 37 10L40 14H24Z" fill="#dcc7b0"/><path d="M4 40Q5 24 14 19L19 16H24L33 19Q36 30 35 40Z" fill="#ebe6f1"/><path d="M10 21L16 16L22 17L20 24Q14 25 10 21Z" fill="#a9b9e2"/><ellipse cx="15" cy="10" rx="4.600" ry="6.200" fill="#a67e63"/><path d="M10.500 6.500Q14.500 1.500 19.500 5.500Q15.500 4 10.500 7.500Z" fill="#5a4d55"/><path d="M13 14H19L20 19H14Z" fill="#9b7b6a"/></g></g></svg>
<svg class="a" style="left:792.96px;top:663.600px" width="40.400" height="40.400" viewBox="0 0 40 40"><defs><clipPath id="cp4"><circle cx="20" cy="20" r="20"/></clipPath></defs><g clip-path="url(#cp4)"><g filter="url(#bl1)"><rect x="-3" y="-3" width="46" height="46" fill="#f3b517"/><path d="M0 0H40V12L20 14L3 10Z" fill="#17181a"/><path d="M22 15.500L37 9L41 13V31L31 35L33 25L27 18Z" fill="#d6cfae"/><path d="M19 11L36 6L38.500 10L24 16Z" fill="#1f5a22"/><path d="M15 1.500Q21 .500 27 2L24 5L17 5.500Z" fill="#e9e9e4"/><path d="M5 9Q10 6 16 10L17 18Q12 22 8 18Z" fill="#5a1f12"/><path d="M5 5Q12 2 18 8L16 12Q10 8 5 11Z" fill="#1c1414"/><path d="M18 16Q28 20 34 28L30 34Q24 24 17 20Z" fill="#fdc827"/></g></g></svg>
<div class="a" style="left:966.200px;top:465.800px;width:235.800px;height:134.200px;background:#151515;box-shadow:0 0 3px rgba(0,0,0,.5)"></div>
<svg class="a" style="left:983px;top:473px" width="16" height="16" viewBox="0 0 16 16"><circle cx="8" cy="8" r="6.300" fill="#ea3c1c" stroke="#fff" stroke-width="1.500"/></svg>
<div class="t" style="left:1003.700px;top:475.400px;font-size:11.600px;color:#fff;-webkit-text-stroke:.35px #fff;transform-origin:0 0;transform:scaleX(1.015)">Meeting in "General"</div>
<div class="t" style="left:1125px;top:476.700px;font-size:9.300px;color:#fff;-webkit-text-stroke:.3px #fff;transform-origin:0 0;transform:scaleX(.94)">02:35:43</div>
<div class="a" style="left:1180px;top:483.500px;width:8px;height:1.300px;background:#eee"></div>
<div class="a" style="left:1059px;top:500.300px;width:50.800px;height:50.800px;border-radius:50%;background:#cbdfd8;color:#1d4a3a;font-size:20.400px;line-height:51.500px;text-align:center;-webkit-text-stroke:.35px #1d4a3a"><span style="display:inline-block;transform:scaleX(.9)">SO</span></div>
<div class="a" style="left:1024px;top:562px;width:90.300px;height:30px;background:#3c3c3c"></div>
<div class="a" style="left:1114.300px;top:562px;width:30.500px;height:30px;background:#c7503f"></div>
<svg class="a" style="left:1031.5px;top:570.5px" width="16" height="13" viewBox="0 0 16 13"><rect x="1" y="2" width="9" height="8.500" rx="1.200" fill="#f4f4f4"/><path d="M10.500 5L14.500 2.500V10L10.500 7.500Z" fill="#f4f4f4"/><path d="M1 .500L13 12.500" stroke="#3c3c3c" stroke-width="2.200"/><path d="M1 .500L13 12.500" stroke="#f4f4f4" stroke-width="1"/></svg>
<svg class="a" style="left:1063.5px;top:570px" width="11" height="15" viewBox="0 0 11 15"><rect x="3.300" y=".500" width="4.400" height="8" rx="2.200" fill="#f4f4f4"/><path d="M1.300 6.500Q1.300 10.500 5.500 10.500Q9.700 10.500 9.700 6.500M5.500 10.500V14" fill="none" stroke="#f4f4f4" stroke-width="1.100"/></svg>
<svg class="a" style="left:1092.5px;top:572px" width="14" height="11" viewBox="0 0 14 11"><rect x=".700" y=".700" width="12.600" height="9.200" rx="1.200" fill="none" stroke="#f4f4f4" stroke-width="1.200"/><path d="M5 3.200L9 7.200M9 3.200L5 7.200" stroke="#f4f4f4" stroke-width="1.200"/></svg>
<svg class="a" style="left:1122.5px;top:574px" width="14" height="8" viewBox="0 0 14 8"><path d="M.800 6Q.500 1 7 1Q13.500 1 13.200 6Q13 7 11.800 6.800L10 6.300Q9.300 6 9.500 4.500Q7 3.700 4.500 4.500Q4.700 6 4 6.300L2.200 6.800Q1 7 .800 6Z" fill="#f4f4f4"/></svg>
<div class="t" style="left:968.800px;top:550.700px;font-size:16.800px;color:rgba(235,235,235,.52)">Activate Windows</div>
<div class="t" style="left:969.300px;top:571.500px;font-size:12.600px;color:rgba(235,235,235,.5)">Go to Settings to activate Windows.</div>
</body>
</html>
